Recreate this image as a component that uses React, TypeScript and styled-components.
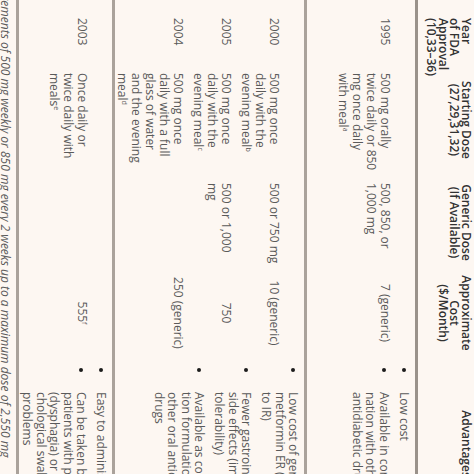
import React from "react";
import styled, { createGlobalStyle } from "styled-components";

const Global = createGlobalStyle`
  html, body { margin: 0; padding: 0; background: #fdf7f2; }
  #root { width: 474px; height: 474px; }
`;

const Stage = styled.div`
  width: 474px;
  height: 474px;
  overflow: hidden;
  background: #fdf7f2;
  font-family: "Open Sans", "Noto Sans", sans-serif;
`;

const Sheet = styled.div`
  width: 474px;
  height: 474px;
  transform: rotate(90deg);
  transform-origin: 50% 50%;
`;

const Table = styled.div`
  width: 532px;
  display: flex;
  flex-direction: column;
`;

const HeadRule = styled.div`
  height: 3px;
  flex: none;
  background: #9a928b;
`;

const RowRule = styled.div`
  height: 3px;
  flex: none;
  background: #aaa29b;
`;

const HeaderRow = styled.div`
  display: grid;
  grid-template-columns: 65px 110px 95px 86px 176px;
  align-items: start;
  height: 56px;
  box-sizing: border-box;
  padding-top: 2px;
  flex: none;
`;

const HeadCell = styled.div<{ $left?: boolean }>`
  font-weight: 600;
  font-size: 12px;
  line-height: 11.7px;
  color: #323232;
  white-space: nowrap;
  text-align: ${(p) => (p.$left ? "left" : "center")};
  padding-left: ${(p) => (p.$left ? "18px" : "0")};
`;

const BodyRow = styled.div<{ $h: number }>`
  display: grid;
  grid-template-columns: 356px 176px;
  height: ${(p) => p.$h}px;
  box-sizing: border-box;
  flex: none;
`;

const Entries = styled.div`
  display: flex;
  flex-direction: column;
  gap: 6px;
  padding-top: 23px;
`;

const SubRow = styled.div`
  display: grid;
  grid-template-columns: 65px 110px 95px 86px;
`;

const Cell = styled.div<{ $pad?: number; $center?: boolean }>`
  font-size: 12px;
  line-height: 14px;
  color: #5a5a5a;
  white-space: nowrap;
  padding-left: ${(p) => p.$pad ?? 8}px;
  text-align: ${(p) => (p.$center ? "center" : "left")};
`;

const Line = styled.span`
  display: block;
`;

const Sup = styled.sup`
  font-size: 7px;
  line-height: 0;
  vertical-align: 4px;
`;

const Advantages = styled.ul`
  list-style: none;
  margin: 0;
  padding: 4px 0 0;
  display: flex;
  flex-direction: column;
  gap: 6.5px;
`;

const Item = styled.li`
  display: grid;
  grid-template-columns: 36px 1fr;
  font-size: 12px;
  line-height: 13.5px;
  color: #5a5a5a;
  white-space: nowrap;
`;

const Dot = styled.span`
  width: 4px;
  height: 4px;
  border-radius: 50%;
  background: #1c1c1c;
  margin: 5px 0 0 12px;
`;

const Footnote = styled.div`
  font-size: 12px;
  line-height: 14px;
  font-style: italic;
  color: #5a5a5a;
  white-space: nowrap;
  padding-top: 4px;
  text-indent: -20px;
`;

type Text = React.ReactNode[];

interface Entry {
  year: string;
  dose: Text;
  generic: Text;
  cost: Text;
}

interface Group {
  height: number;
  entries: Entry[];
  advantages: Text[];
}

const groups: Group[] = [
  {
    height: 107.5,
    entries: [
      {
        year: "1995",
        dose: [
          "500 mg orally",
          "twice daily or 850",
          "mg once daily",
          <>with meal<Sup>a</Sup></>,
        ],
        generic: ["500, 850, or", "1,000 mg"],
        cost: ["7 (generic)"],
      },
    ],
    advantages: [
      ["Low cost"],
      ["Available in combi-", "nation with other", "antidiabetic drugs"],
    ],
  },
  {
    height: 189,
    entries: [
      {
        year: "2000",
        dose: ["500 mg once", "daily with the", <>evening meal<Sup>b</Sup></>],
        generic: ["500 or 750 mg"],
        cost: ["10 (generic)"],
      },
      {
        year: "2005",
        dose: ["500 mg once", "daily with the", <>evening meal<Sup>c</Sup></>],
        generic: ["500 or 1,000", "mg"],
        cost: ["750"],
      },
      {
        year: "2004",
        dose: [
          "500 mg once",
          "daily with a full",
          "glass of water",
          "and the evening",
          <>meal<Sup>d</Sup></>,
        ],
        generic: [],
        cost: ["250 (generic)"],
      },
    ],
    advantages: [
      ["Low cost of generic", "metformin ER (compared", "to IR)"],
      ["Fewer gastrointestinal", "side effects (improved", "tolerability)"],
      [
        "Available as combina-",
        "tion formulation with",
        "other oral antidiabetic",
        "drugs",
      ],
    ],
  },
  {
    height: 93,
    entries: [
      {
        year: "2003",
        dose: ["Once daily or", "twice daily with", <>meals<Sup>e</Sup></>],
        generic: [],
        cost: [<>555<Sup>f</Sup></>],
      },
    ],
    advantages: [
      ["Easy to administer"],
      [
        "Can be taken by",
        "patients with physical",
        "(dysphagia) or psy-",
        "chological swallowing",
        "problems",
      ],
    ],
  },
];

const Lines = ({ items }: { items: Text }) => (
  <>
    {items.map((t, i) => (
      <Line key={i}>{t}</Line>
    ))}
  </>
);

export default function App() {
  return (
    <>
      <Global />
      <Stage>
        <Sheet>
          <Table>
            <HeaderRow>
              <HeadCell $left>
                <Line>Year</Line>
                <Line>of FDA</Line>
                <Line>Approval</Line>
                <Line>(10,33–36)</Line>
              </HeadCell>
              <HeadCell>
                <Line>Starting Dose</Line>
                <Line>(27,29,31,32)</Line>
              </HeadCell>
              <HeadCell>
                <Line>Generic Dose</Line>
                <Line>(If Available)</Line>
              </HeadCell>
              <HeadCell>
                <Line>Approximate</Line>
                <Line>Cost</Line>
                <Line>($/Month)</Line>
              </HeadCell>
              <HeadCell>
                <Line>Advantages</Line>
              </HeadCell>
            </HeaderRow>
            <HeadRule />
            {groups.map((g, gi) => (
              <React.Fragment key={gi}>
                <BodyRow $h={g.height}>
                  <Entries>
                    {g.entries.map((e) => (
                      <SubRow key={e.year}>
                        <Cell $pad={18}>{e.year}</Cell>
                        <Cell>
                          <Lines items={e.dose} />
                        </Cell>
                        <Cell>
                          <Lines items={e.generic} />
                        </Cell>
                        <Cell $pad={0} $center>
                          <Lines items={e.cost} />
                        </Cell>
                      </SubRow>
                    ))}
                  </Entries>
                  <Advantages>
                    {g.advantages.map((a, ai) => (
                      <Item key={ai}>
                        <Dot />
                        <span>
                          <Lines items={a} />
                        </span>
                      </Item>
                    ))}
                  </Advantages>
                </BodyRow>
                <RowRule />
              </React.Fragment>
            ))}
            <Footnote>
              Increments of 500 mg weekly or 850 mg every 2 weeks up to a maximum dose of 2,550 mg
            </Footnote>
          </Table>
        </Sheet>
      </Stage>
    </>
  );
}
